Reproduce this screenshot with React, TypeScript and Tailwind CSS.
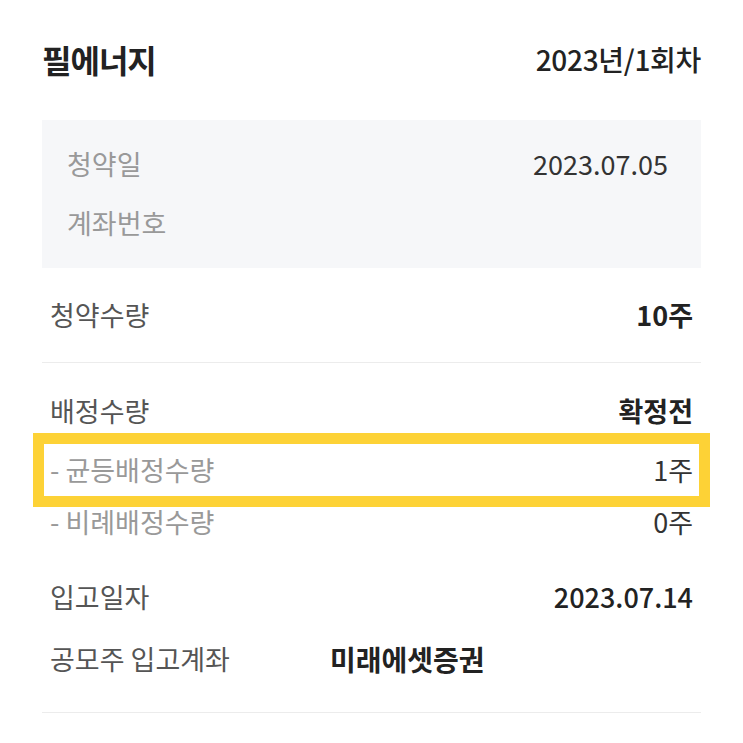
import React from 'react';

const font = { fontFamily: '"Noto Sans CJK KR", "Noto Sans", sans-serif' };

interface RowProps {
  label: string;
  value?: string;
  labelClass?: string;
  valueClass?: string;
  className?: string;
}

const Row = ({ label, value, labelClass = '', valueClass = '', className = '' }: RowProps) => (
  <div className={`flex items-center justify-between ${className}`}>
    <span className={labelClass}>{label}</span>
    {value && <span className={valueClass}>{value}</span>}
  </div>
);

export default function App() {
  return (
    <div style={font} className="w-[743px] h-[743px] bg-white overflow-hidden">
      <div className="px-[42px]">
        {/* header */}
        <div className="flex items-center justify-between h-[120px] pb-[2px]">
          <span className="text-[32px] font-bold text-[#222] tracking-[-1px]">필에너지</span>
          <span className="text-[28px] font-medium text-[#222] tracking-[-0.3px]">2023년/1회차</span>
        </div>

        {/* subscription info box */}
        <div className="bg-[#f6f7f9] h-[148px] pl-[25px] pr-[33px] pt-[27px] flex flex-col gap-[25px]">
          <Row
            label="청약일"
            value="2023.07.05"
            className="h-[34px]"
            labelClass="text-[27px] text-[#999]"
            valueClass="text-[27px] text-[#333]"
          />
          <Row label="계좌번호" className="h-[34px]" labelClass="text-[27px] text-[#999]" />
        </div>

        <div className="px-[8px]">
          <Row
            label="청약수량"
            value="10주"
            className="h-[94px] pt-[1px]"
            labelClass="text-[27px] text-[#555]"
            valueClass="text-[27px] font-semibold text-[#222]"
          />
        </div>
        <div className="h-[1px] bg-[#ececec]" />

        <div className="px-[8px]">
          <Row
            label="배정수량"
            value="확정전"
            className="h-[70px] pt-[26px]"
            labelClass="text-[27px] text-[#555]"
            valueClass="text-[27px] font-bold text-[#222]"
          />
        </div>
      </div>

      {/* highlighted row */}
      <div className="mx-[33px] w-[677px] border-[11px] border-[#fdd236]">
        <Row
          label="- 균등배정수량"
          value="1주"
          className="h-[52px] pl-[6px] pr-[6px]"
          labelClass="text-[27px] text-[#999]"
          valueClass="text-[27px] text-[#333]"
        />
      </div>

      <div className="px-[42px]">
        <div className="px-[8px]">
          <Row
            label="- 비례배정수량"
            value="0주"
            className="h-[32px] -mt-[1px]"
            labelClass="text-[27px] text-[#999]"
            valueClass="text-[27px] text-[#333]"
          />
          <Row
            label="입고일자"
            value="2023.07.14"
            className="h-[42px] mt-[38px]"
            labelClass="text-[27px] text-[#555]"
            valueClass="text-[27px] font-medium text-[#222]"
          />
          <div className="flex items-center h-[42px] mt-[20px]">
            <span className="w-[280px] text-[27px] text-[#555]">공모주 입고계좌</span>
            <span className="text-[28px] font-bold text-[#222]">미래에셋증권</span>
          </div>
        </div>
        <div className="h-[1px] bg-[#ececec] mt-[32px]" />
      </div>
    </div>
  );
}
